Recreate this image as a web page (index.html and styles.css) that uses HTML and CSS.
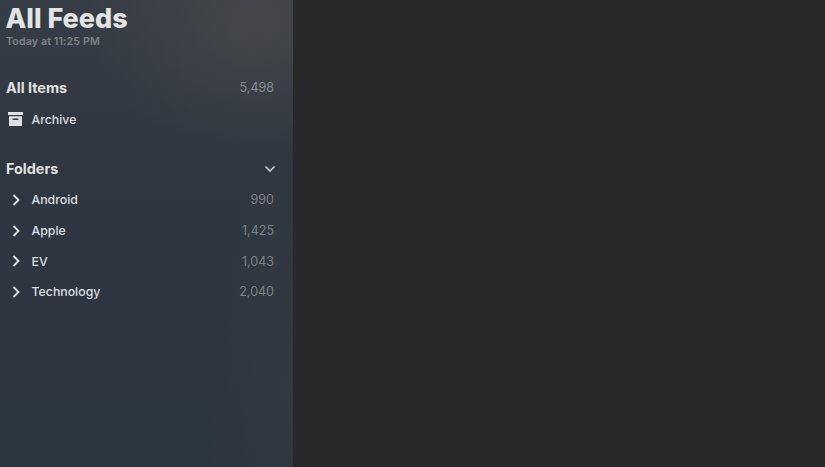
FILE: index.html
```html
<!DOCTYPE html>
<html lang="en">
<head>
    <meta charset="UTF-8">
    <meta name="viewport" content="width=device-width, initial-scale=1.0">
    <title>All Feeds</title>
    <link rel="stylesheet" href="styles.css">
</head>
<body>

    <!-- Sidebar -->
    <div class="sidebar">
        <div class="title">All Feeds</div>
        <div class="updated">Today at 11:25 PM</div>

        <div class="section-row first">
            <span class="section-name">All Items</span>
            <span class="count total">5,498</span>
        </div>
        <div class="row">
            <span class="row-icon archive-icon">
                <svg width="15" height="14" viewBox="0 0 15 14">
                    <rect x="0" y="0" width="15" height="3" fill="#dfe1e3"/>
                    <path d="M1 4.2H14V14H1ZM4.6 6.4V8H10.4V6.4Z" fill="#dfe1e3" fill-rule="evenodd"/>
                </svg>
            </span>
            <span class="row-name">Archive</span>
        </div>

        <div class="section-row second">
            <span class="section-name">Folders</span>
            <svg class="collapse" width="12" height="8" viewBox="0 0 12 8">
                <path d="M1.5 1.5L6 6L10.5 1.5" fill="none" stroke="#c9ccd0" stroke-width="1.7"/>
            </svg>
        </div>
        <div class="row">
            <span class="row-icon">
                <svg width="8" height="12" viewBox="0 0 8 12"><path d="M1.5 1L6.5 6L1.5 11" fill="none" stroke="#e4e6e8" stroke-width="1.8"/></svg>
            </span>
            <span class="row-name">Android</span>
            <span class="count">990</span>
        </div>
        <div class="row">
            <span class="row-icon">
                <svg width="8" height="12" viewBox="0 0 8 12"><path d="M1.5 1L6.5 6L1.5 11" fill="none" stroke="#e4e6e8" stroke-width="1.8"/></svg>
            </span>
            <span class="row-name">Apple</span>
            <span class="count">1,425</span>
        </div>
        <div class="row">
            <span class="row-icon">
                <svg width="8" height="12" viewBox="0 0 8 12"><path d="M1.5 1L6.5 6L1.5 11" fill="none" stroke="#e4e6e8" stroke-width="1.8"/></svg>
            </span>
            <span class="row-name">EV</span>
            <span class="count">1,043</span>
        </div>
        <div class="row">
            <span class="row-icon">
                <svg width="8" height="12" viewBox="0 0 8 12"><path d="M1.5 1L6.5 6L1.5 11" fill="none" stroke="#e4e6e8" stroke-width="1.8"/></svg>
            </span>
            <span class="row-name">Technology</span>
            <span class="count">2,040</span>
        </div>
    </div>

    <!-- Empty reading pane -->
    <div class="content"></div>

</body>
</html>
```

FILE: styles.css
```css
/* General Styles */
html, body {
    height: 100%;
}

body {
    margin: 0;
    display: flex;
    overflow: hidden;
    font-family: Inter, "Liberation Sans", sans-serif;
    background-color: #272829;
}

/* Sidebar */
.sidebar {
    width: 293px;
    flex-shrink: 0;
    box-sizing: border-box;
    padding: 0 19px 0 6px;
    background-color: #2c3540;
    background-image:
        radial-gradient(ellipse 170px 130px at 255px 25px, rgba(74, 74, 75, 0.7), rgba(74, 74, 75, 0)),
        radial-gradient(ellipse 90px 240px at 293px 390px, rgba(58, 60, 66, 0.45), rgba(58, 60, 66, 0)),
        linear-gradient(180deg, #373d46 0%, #2f3741 30%, #2b3540 100%);
}

.title {
    margin-top: 2px;
    margin-left: -0.5px;
    font-size: 27px;
    line-height: 33px;
    font-weight: 800;
    color: #e2e3e4;
}

.updated {
    font-size: 10.7px;
    line-height: 13px;
    font-weight: 600;
    letter-spacing: 0.1px;
    color: #7e8388;
}

/* Rows */
.section-row {
    display: flex;
    align-items: center;
    justify-content: space-between;
    height: 31px;
}

.section-row.first {
    margin-top: 24.4px;
}

.section-row.second {
    margin-top: 19px;
}

.section-name {
    font-size: 14.4px;
    font-weight: 700;
    color: #e0e1e2;
}

.collapse {
    margin-right: -2px;
}

.row {
    display: flex;
    align-items: center;
    box-sizing: border-box;
    height: 30.7px;
    padding-top: 1px;
}

.row-icon {
    width: 26px;
    flex-shrink: 0;
    display: flex;
    align-items: center;
    justify-content: center;
    padding-right: 6px;
    box-sizing: border-box;
}

.archive-icon {
    padding-right: 7px;
}

.row-name {
    flex: 1;
    margin-left: -0.5px;
    font-size: 12.3px;
    font-weight: 500;
    color: #dcdee0;
}

.count {
    font-size: 12.5px;
    color: #7d8286;
}

.count.total {
    color: #888b8f;
}

/* Reading pane */
.content {
    flex: 1;
    background-color: #272829;
}
```
